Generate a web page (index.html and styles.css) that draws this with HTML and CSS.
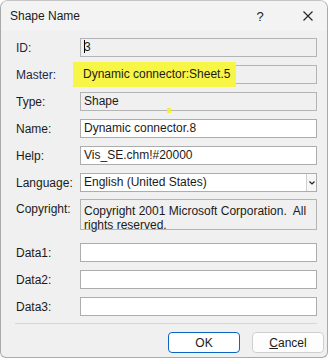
FILE: index.html
```html
<!DOCTYPE html>
<html lang="en">
<head>
  <meta charset="UTF-8" />
  <title>Shape Name</title>
  <link rel="stylesheet" href="styles.css">
</head>
<body>
  <div class="dialog">
    <div class="titlebar">
      <span class="title">Shape Name</span>
      <span class="help">?</span>
      <svg class="close" width="10" height="10" viewBox="0 0 10 10"><path d="M0.5 0.5L9.5 9.5M9.5 0.5L0.5 9.5" stroke="#222" stroke-width="1.1"/></svg>
    </div>

    <div class="form">
      <div class="row">
        <label class="dim">ID:</label>
        <div class="field ro"><span class="caret"></span>3</div>
      </div>
      <div class="row">
        <label class="dim">Master:</label>
        <div class="field ro"><span class="mark">Dynamic connector:Sheet.5</span></div>
      </div>
      <div class="row">
        <label>Type:</label>
        <div class="field ro">Shape<span class="dot"></span></div>
      </div>
      <div class="row">
        <label>Name:</label>
        <div class="field">Dynamic connector.8</div>
      </div>
      <div class="row">
        <label>Help:</label>
        <div class="field">Vis_SE.chm!#20000</div>
      </div>
      <div class="row">
        <label>Language:</label>
        <div class="field select">
          <span>English (United States)</span>
          <span class="arrow"><svg width="6" height="4" viewBox="0 0 6 4"><path d="M0.5 0.5L3 3L5.5 0.5" stroke="#222" fill="none" stroke-width="1.2"/></svg></span>
        </div>
      </div>
      <div class="row top">
        <label>Copyright:</label>
        <div class="field ro multi">Copyright 2001 Microsoft Corporation.&nbsp; All rights reserved.</div>
      </div>
      <div class="row data">
        <label>Data1:</label>
        <div class="field"></div>
      </div>
      <div class="row">
        <label>Data2:</label>
        <div class="field"></div>
      </div>
      <div class="row">
        <label>Data3:</label>
        <div class="field"></div>
      </div>
    </div>

    <div class="sep"></div>
    <div class="buttons">
      <button class="btn default">OK</button>
      <button class="btn"><u>C</u>ancel</button>
    </div>
  </div>
</body>
</html>
```

FILE: styles.css
```css
*{margin:0;padding:0;box-sizing:border-box}
body{background:#fff;font-family:"Liberation Sans",Arial,sans-serif;font-size:12px;color:#1b1b1b;width:333px;height:361px;overflow:hidden}
.dialog{width:328px;height:358px;background:#f0f0f0;border:1px solid #a9a9a9;border-top-color:#c4c4c4;border-radius:8px 8px 6px 6px;overflow:hidden}
.titlebar{height:30px;background:#f3f3f3;display:flex;align-items:center;padding-left:9px}
.title{flex:1;font-size:12px;color:#1b1b1b}
.help{width:10px;margin-right:38px;font-size:13px;text-align:center}
.close{margin-right:14px}
.form{padding:7px 0 0 15px;display:flex;flex-direction:column;gap:8px}
.row{display:flex;align-items:center;height:19px}
.row label{width:64px}
.row label.dim{color:#1d2845}
.field{position:relative;width:237px;height:19px;border:1px solid #adadad;background:#fff;padding-left:3px;line-height:17px;white-space:nowrap}
.field.ro{background:#f0f0f0;border-color:#b4b4b4}
.caret{display:inline-block;width:1px;height:13px;background:#000;vertical-align:-2px;margin-right:-1px}
.mark{display:inline-block;background:#f7f545;margin:-4px 0 -4px -11px;padding:3px 6px 4px 10px;line-height:18px;position:relative;z-index:1}
.dot{position:absolute;left:86px;top:15px;width:4px;height:5px;background:#f3ee4a}
.select{display:flex;justify-content:space-between}
.arrow{width:10px;border-left:1px solid #d0d0d0;display:flex;align-items:center;justify-content:center;background:#f7f7f7}
.row.top{align-items:flex-start;height:31px;margin-top:-1px}
.row.top label{margin-top:3px}
.multi{height:31px;white-space:normal;line-height:14px;padding:4px 8px 0 3px}
.row.data{margin-top:5px}
.sep{height:1px;background:#d6d6d6;margin:7px 10px 0 14px}
.buttons{display:flex;justify-content:flex-end;gap:12px;padding:8px 3px 0 0}
.btn{width:72px;height:21px;border:1px solid #cfcfcf;border-radius:4px;background:#fdfdfd;font-family:inherit;font-size:12px;color:#1b1b1b}
.btn.default{border-color:#0a65c0;background:#fff}
```
